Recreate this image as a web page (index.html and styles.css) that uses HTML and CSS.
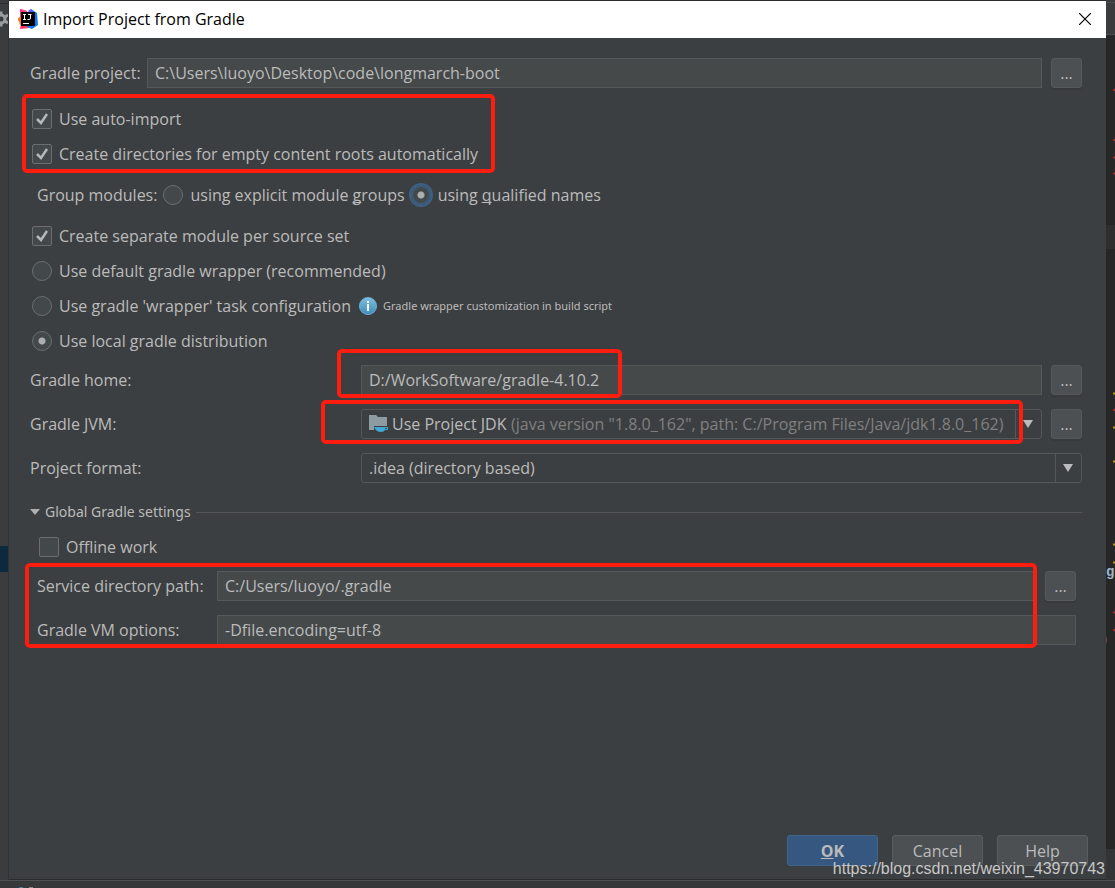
FILE: index.html
```html
<!DOCTYPE html>
<html lang="en">
<head>
    <meta charset="UTF-8">
    <meta name="viewport" content="width=device-width, initial-scale=1.0">
    <title>Import Project from Gradle</title>
    <link rel="stylesheet" href="styles.css">
</head>
<body>
    <!-- IDE window behind the dialog, left edge -->
    <div class="edge-left">
        <svg width="9" height="600" viewBox="0 0 9 600" aria-hidden="true">
            <path d="M0 3.500H9" stroke="#2b2b2b"/>
            <g stroke="#999b9d" fill="none">
                <circle cx="1" cy="19" r="4" stroke-width="3"/>
                <path d="M1 11.500v3M1 23.500v3M5 17l3-2M5 21l3 2" stroke-width="3"/>
            </g>
            <rect y="546" width="9" height="26" fill="#0d293e"/>
        </svg>
    </div>

    <main class="dialog">
        <header class="titlebar">
            <svg class="logo" width="20" height="20" viewBox="0 0 20 20" aria-hidden="true">
                <path d="M2 0l7 2 2 17-9 1 1-6-3-3 2-3z" fill="#fe315d"/>
                <path d="M0 9l4-2 2 8-4 1z" fill="#f97a12"/>
                <path d="M3 0l6 2-5 7-2-2z" fill="#fc3f8e"/>
                <path d="M13 0l6 4 1 12-6 4-5-2 2-16z" fill="#087cfa"/>
                <path d="M10 2l3-2 2 3-2 3z" fill="#6b57ff"/>
                <rect x="3" y="3" width="14" height="14" fill="#000"/>
                <path d="M5 5.500h3M6.500 5.500v5M5 10.500h3M10 5.500h3.500M12.500 5.500v3.500q0 1.500-1.500 1.500h-1.500M5 14.500h6" fill="none" stroke="#fff"/>
            </svg>
            <h1>Import Project from Gradle</h1>
            <button class="close" type="button" aria-label="Close">
                <svg width="12" height="12" viewBox="0 0 12 12"><path d="M0 0l12 12M12 0L0 12" stroke="#000" stroke-width="1.200"/></svg>
            </button>
        </header>

        <form class="content">
            <div class="row project">
                <label for="project">Gradle project:</label>
                <input class="field" type="text" id="project" value="C:\Users\luoyo\Desktop\code\longmarch-boot">
                <button class="browse" type="button" aria-label="Browse project">...</button>
            </div>

            <div class="options marked mark-import">
                <label class="option"><input type="checkbox" checked>Use auto-import</label>
                <label class="option"><input type="checkbox" checked>Create directories for empty content roots automatically</label>
            </div>

            <div class="group">
                <span>Group modules:</span>
                <label class="option"><input type="radio" name="modules"><span>using explicit module <u>g</u>roups</span></label>
                <label class="option"><input class="focused" type="radio" name="modules" checked><span>using <u>q</u>ualified names</span></label>
            </div>

            <div class="options">
                <label class="option"><input type="checkbox" checked>Create separate module per source set</label>
                <label class="option"><input type="radio" name="wrapper">Use default gradle wrapper (recommended)</label>
                <div class="option-line">
                    <label class="option"><input type="radio" name="wrapper">Use gradle 'wrapper' task configuration</label>
                    <span class="hint">
                        <svg width="18" height="18" viewBox="0 0 18 18" aria-hidden="true">
                            <defs>
                                <linearGradient id="info" x2="0" y2="1">
                                    <stop stop-color="#7fbddd"/>
                                    <stop offset="1" stop-color="#3c8dbd"/>
                                </linearGradient>
                            </defs>
                            <circle cx="9" cy="9" r="8.500" fill="url(#info)" stroke="#6fb0d2"/>
                            <path d="M8 4h2v2H8zM8 7h2v7H8z" fill="#fff"/>
                        </svg>
                        Gradle wrapper customization in build script
                    </span>
                </div>
                <label class="option"><input type="radio" name="wrapper" checked>Use local gradle distribution</label>
            </div>

            <div class="settings">
                <div class="row">
                    <label class="marked mark-home" for="home">Gradle home:</label>
                    <input class="field" type="text" id="home" value="D:/WorkSoftware/gradle-4.10.2">
                    <button class="browse" type="button" aria-label="Browse Gradle home">...</button>
                </div>
                <div class="row">
                    <label for="jvm">Gradle JVM:</label>
                    <div class="combo jvm marked mark-jvm">
                        <select id="jvm">
                            <option>Use Project JDK</option>
                        </select>
                        <svg class="folder" width="20" height="18" viewBox="0 0 20 18" aria-hidden="true">
                            <path d="M0 0h7l2 2h9v9H5v4H0z" fill="#8f9ba3"/>
                            <path d="M5 12h14v3h-3q-1 2-4 2-5 0-7-5z" fill="#3fa8d5"/>
                            <path d="M16 13h2v1h-2z" fill="#3c3f41"/>
                        </svg>
                        <span class="detail">(java version "1.8.0_162", path: C:/Program Files/Java/jdk1.8.0_162)</span>
                        <svg class="arrow" width="10" height="8" viewBox="0 0 10 8" aria-hidden="true"><path d="M0 0h10L5 8z"/></svg>
                    </div>
                    <button class="browse" type="button" aria-label="Browse JVM">...</button>
                </div>
                <div class="row">
                    <label for="format">Project format:</label>
                    <div class="combo">
                        <select id="format">
                            <option>.idea (directory based)</option>
                        </select>
                        <svg class="arrow" width="10" height="8" viewBox="0 0 10 8" aria-hidden="true"><path d="M0 0h10L5 8z"/></svg>
                    </div>
                </div>
            </div>

            <h2 class="section">
                <svg width="10" height="6" viewBox="0 0 10 6" aria-hidden="true"><path d="M0 0h10L5 6z"/></svg>
                Global Gradle settings
            </h2>

            <div class="global">
                <label class="option offline"><input type="checkbox">Offline work</label>
                <div class="marked mark-global">
                    <div class="row">
                        <label for="service">Service directory path:</label>
                        <input class="field" type="text" id="service" value="C:/Users/luoyo/.gradle">
                        <button class="browse" type="button" aria-label="Browse service directory">...</button>
                    </div>
                    <div class="row">
                        <label for="vm">Gradle VM options:</label>
                        <input class="field" type="text" id="vm" value="-Dfile.encoding=utf-8">
                    </div>
                </div>
            </div>

            <footer class="buttons">
                <button class="ok" type="submit"><u>O</u>K</button>
                <button type="button">Cancel</button>
                <button type="button">Help</button>
            </footer>
        </form>
    </main>

    <!-- Editor gutter with error and warning stripes -->
    <div class="edge-right">
        <svg width="9" height="880" viewBox="0 0 9 880" aria-hidden="true">
            <rect width="9" height="35" fill="#3a3c3e"/>
            <path d="M0 2.500h9M0 34.500h9" stroke="#4b4d4f"/>
            <rect y="225" width="9" height="24" fill="#2e2e2e"/>
            <path d="M7 90h2M7 140h2M7 157.500h2M7 173.500h2M7 410h2M7 612.500h2M7 630h2" stroke="#9e2927" stroke-width="2"/>
            <path d="M7 393.500h2M7 427.500h2M7 461.500h2M7 544.500h2M7 562.500h2" stroke="#be9117" stroke-width="2"/>
            <path d="M0 636q2 4 0 8" fill="#7a4a48"/>
            <text x="0" y="576">g</text>
            <rect y="849" width="9" height="31" fill="#323436"/>
        </svg>
    </div>

    <div class="edge-bottom">
        <svg width="40" height="7" viewBox="0 0 40 7" aria-hidden="true">
            <path d="M19 6.500h4" stroke="#3f7f96"/>
            <path d="M29 6.500h4" stroke="#85888a"/>
        </svg>
    </div>
    <p class="watermark">https://blog.csdn.net/weixin_43970743</p>
</body>
</html>
```
FILE: styles.css
```css
*,
*::after {
    box-sizing: border-box;
}

body {
    position: relative;
    display: grid;
    grid-template-columns: 9px 1fr 9px;
    grid-template-rows: 1fr 8px;
    min-height: 100vh;
    margin: 0;
    background: #3a3c3e;
    color: #bbbbbb;
    font-family: "Open Sans", "Noto Sans", sans-serif;
    font-size: 16px;
    line-height: 20px;
}

input,
select,
button {
    margin: 0;
    color: inherit;
    font: inherit;
}

u {
    text-decoration-skip-ink: none;
}

/* Parts of the IDE window around the dialog */
.edge-left {
    border-right: 1px solid #303233;
    overflow: hidden;
}

.edge-right {
    background: #262626;
    overflow: hidden;
}

.edge-right text {
    fill: #9fb4cc;
    font-family: "Liberation Mono", monospace;
    font-size: 14px;
    font-weight: bold;
}

.edge-bottom {
    grid-column: 1 / -1;
    border-top: 1px solid #4e5052;
    background: #36383a;
}

.edge-left svg,
.edge-right svg,
.edge-bottom svg {
    display: block;
}

/* Dialog */
.dialog {
    display: flex;
    flex-direction: column;
    border-top: 1px solid #2b2b2b;
    border-bottom: 1px solid #2b2b2b;
    background: #3c3f41;
}

.titlebar {
    display: flex;
    align-items: center;
    gap: 5px;
    height: 37px;
    padding: 0 12px 2px 9px;
    background: #fff;
    color: #000;
}

.titlebar h1 {
    flex: 1;
    margin: 0;
    font-size: 16px;
    font-weight: normal;
}

.close {
    display: flex;
    padding: 3px;
    border: 0;
    background: none;
}

.content {
    display: flex;
    flex: 1;
    flex-direction: column;
    padding: 20px 24px 13px 21px;
}

.row {
    display: flex;
    align-items: center;
    height: 30px;
}

.project label {
    width: 117px;
}

.field {
    flex: 1;
    min-width: 0;
    height: 30px;
    padding: 0 7px;
    border: 1px solid #555859;
    background: #45494a;
    outline: none;
}

.browse {
    width: 31px;
    height: 30px;
    margin-left: 9px;
    padding: 0;
    border: 1px solid #56595b;
    border-radius: 3px;
    background: #4c5052;
    box-shadow: 0 2px 0 #37393b;
}

/* Check boxes and radio buttons */
.options {
    display: flex;
    flex-direction: column;
    align-items: flex-start;
    padding-left: 2px;
}

.option {
    display: flex;
    align-items: center;
    gap: 7px;
    height: 35px;
}

.option input {
    appearance: none;
    width: 20px;
    height: 20px;
    border: 1px solid #6b6e70;
    border-radius: 2px;
    background: #43494a;
}

.option input[type="checkbox"]:checked {
    background: #43494a url("data:image/svg+xml,%3Csvg xmlns='http://www.w3.org/2000/svg' viewBox='0 0 18 18'%3E%3Cpath d='M4 9l4 4 6-9' fill='none' stroke='%23b5b7b8' stroke-width='2.500'/%3E%3C/svg%3E");
}

.option input[type="radio"] {
    border-radius: 50%;
}

.option input[type="radio"]:checked {
    background: radial-gradient(circle, #adadad 3px, #43494a 4px);
}

.option .focused {
    border-color: #3d6185;
    box-shadow: 0 0 0 2px #3d6185, inset 0 0 0 1px #3d6185;
}

.option-line {
    display: flex;
    align-items: center;
    gap: 8px;
}

.hint {
    display: flex;
    align-items: center;
    gap: 6px;
    font-family: "Noto Sans", sans-serif;
    font-size: 11px;
}

.group {
    display: flex;
    align-items: center;
    gap: 6px;
    margin: 6px 0;
    padding-left: 7px;
}

/* Red frames that point out the settings to change */
.marked {
    position: relative;
}

.marked::after {
    content: "";
    position: absolute;
    border: 4px solid #ff1d10;
    border-radius: 5px;
    pointer-events: none;
}

.mark-import {
    width: 465px;
    margin-top: 13px;
}

.mark-import::after {
    inset: -7px 0 -2px -8px;
}

.mark-home::after {
    top: -21px;
    left: 307px;
    width: 285px;
    height: 49px;
}

.mark-jvm::after {
    inset: -10px 18px -6px -41px;
}

.mark-global::after {
    inset: -8px 39px -3px -12px;
}

/* Labelled settings */
.settings {
    display: flex;
    flex-direction: column;
    gap: 14px;
    margin-top: 7px;
}

.settings label {
    width: 331px;
}

.combo {
    display: grid;
    flex: 1;
    grid-template-columns: 1fr 26px;
    align-items: center;
    min-width: 0;
    height: 30px;
    border: 1px solid #555859;
    border-radius: 3px;
}

.combo select {
    grid-area: 1 / 1 / 2 / 3;
    appearance: none;
    width: 100%;
    height: 28px;
    padding: 0 7px;
    border: 0;
    background: linear-gradient(#555859, #555859) right 25px top / 1px 100% no-repeat;
    outline: none;
}

.arrow {
    grid-area: 1 / 2;
    justify-self: center;
    fill: #b9bbbd;
    pointer-events: none;
}

.folder {
    grid-area: 1 / 1;
    margin-left: 7px;
    pointer-events: none;
}

.combo.jvm select {
    padding-left: 30px;
}

.detail {
    grid-area: 1 / 1;
    margin-left: 149px;
    color: #808080;
    white-space: nowrap;
    pointer-events: none;
}

.section {
    display: flex;
    align-items: center;
    gap: 5px;
    height: 30px;
    margin: 14px 0 10px;
    font-family: "Noto Sans", sans-serif;
    font-size: 14px;
    font-weight: normal;
}

.section svg {
    fill: #adafb0;
}

.section::after {
    content: "";
    flex: 1;
    height: 1px;
    background: #555555;
}

.global {
    padding: 0 6px 0 7px;
}

.offline {
    height: 20px;
    margin: 0 0 14px 2px;
}

.mark-global {
    display: flex;
    flex-direction: column;
    gap: 14px;
}

.mark-global label {
    width: 180px;
}

/* Bottom buttons */
.buttons {
    display: flex;
    justify-content: flex-end;
    gap: 14px;
    margin: auto -6px 0 0;
    padding-top: 20px;
}

.buttons button {
    width: 91px;
    height: 31px;
    padding: 0;
    border: 1px solid #5a5d5f;
    border-radius: 3px;
    background: #4c5052;
}

.buttons .ok {
    border-color: #41648a;
    background: #365880;
    font-weight: bold;
}

.watermark {
    position: absolute;
    right: 10px;
    bottom: 9px;
    margin: 0;
    color: #c8c8c8;
    font-family: "Liberation Sans", sans-serif;
    font-size: 16px;
}
```
